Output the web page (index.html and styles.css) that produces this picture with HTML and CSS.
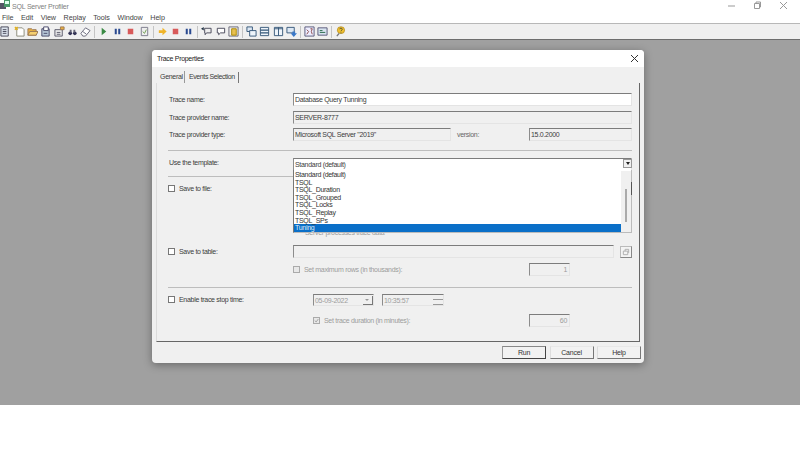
FILE: index.html
```html
<!DOCTYPE html>
<html lang="en">
<head>
    <meta charset="UTF-8">
    <title>SQL Server Profiler</title>
    <link rel="stylesheet" href="styles.css">
</head>
<body>
    <div class="titlebar">
        <svg class="app-icon" viewBox="0 0 11 11"><rect x="0" y="3" width="6" height="6" fill="#556"/><rect x="4" y="0" width="6" height="7" fill="#4a9a6a"/><rect x="5" y="1" width="4" height="3" fill="#dfe"/></svg>
        <span class="app-title">SQL Server Profiler</span>
        <div class="window-controls">
            <svg viewBox="0 0 9 9"><path d="M1 5h7" stroke="#999" fill="none"/></svg>
            <svg viewBox="0 0 9 9"><path d="M1.500 2.500h5v5h-5zM3 2.500V1h4.500v5H6.500" stroke="#999" fill="none"/></svg>
            <svg viewBox="0 0 9 9"><path d="M1 1l7 7M8 1l-7 7" stroke="#999" fill="none"/></svg>
        </div>
    </div>
    <div class="menubar">
        <span>File</span><span>Edit</span><span>View</span><span>Replay</span><span>Tools</span><span>Window</span><span>Help</span>
    </div>
    <div class="toolbar">
        <svg viewBox="0 0 12 12"><path d="M1 1h8v10H1z" fill="#dde4ee" stroke="#445"/><path d="M3 4h4M3 6h4M3 8h4" stroke="#445"/></svg>
        <svg viewBox="0 0 12 12"><path d="M3 2h6l2 2v7H3z" fill="#fff" stroke="#887"/><path d="M1 1l3 3M4 1L1 4" stroke="#e0b020" stroke-width="1.500"/></svg>
        <svg viewBox="0 0 12 12"><path d="M1 3h4l1 1h4v6H1z" fill="#e8b040" stroke="#975"/><path d="M3 6h9l-2 4H1z" fill="#f6d070" stroke="#975"/></svg>
        <svg viewBox="0 0 12 12"><path d="M2 3h8v8H2z" fill="#b8c8d8" stroke="#446"/><path d="M4 1h5v4H4z" fill="#fff" stroke="#446"/><path d="M4 8h4" stroke="#446"/></svg>
        <svg viewBox="0 0 12 12"><path d="M1 4h8v7H1z" fill="#eee" stroke="#556"/><path d="M3 7h4M3 9h4" stroke="#556"/><path d="M7 1h4v3H7z" fill="#e8b040" stroke="#975"/></svg>
        <svg viewBox="0 0 12 12"><circle cx="3.500" cy="8" r="2" fill="#335"/><circle cx="8.500" cy="8" r="2" fill="#335"/><path d="M3 4h2v3H3zM7 4h2v3H7z" fill="#667"/></svg>
        <svg viewBox="0 0 12 12"><path d="M1 8l5-6 5 3-5 6H3z" fill="#fff" stroke="#667"/><path d="M3 6l4 3" stroke="#667"/></svg>
        <i class="sep"></i>
        <svg viewBox="0 0 12 12"><path d="M4 2l5 4-5 4z" fill="#3a8a44"/></svg>
        <svg viewBox="0 0 12 12"><path d="M3 3h2.200v6H3zM6.800 3H9v6H6.800z" fill="#2a4a90"/></svg>
        <svg viewBox="0 0 12 12"><rect x="3" y="3" width="6" height="6" fill="#d85a5a"/></svg>
        <svg viewBox="0 0 12 12"><path d="M2.500 1.500h7v9h-7z" fill="#eee" stroke="#778"/><path d="M4 6l2 2 2-4" stroke="#6a9a4a" fill="none"/></svg>
        <i class="sep"></i>
        <svg viewBox="0 0 12 12"><path d="M2 4.500h4V2l4.500 4L6 10V7.500H2z" fill="#f0b428"/></svg>
        <svg viewBox="0 0 12 12"><rect x="3" y="3" width="6" height="6" fill="#d85a5a"/></svg>
        <svg viewBox="0 0 12 12"><path d="M3 3h2.200v6H3zM6.800 3H9v6H6.800z" fill="#2a4a90"/></svg>
        <i class="sep"></i>
        <svg viewBox="0 0 12 12"><path d="M4 2.500h7v5H6L4.500 9.500v-2H4z" fill="#eee" stroke="#445"/><path d="M0 3l3-2v4z" fill="#234"/></svg>
        <svg viewBox="0 0 12 12"><path d="M2.500 2.500h8v5H6l-2 2v-2H2.500z" fill="#fff" stroke="#445"/></svg>
        <svg viewBox="0 0 12 12"><path d="M1 1h10v10H1z" fill="#eee" stroke="#667"/><path d="M4 3h5v7H4z" fill="#e8c050" stroke="#a80"/></svg>
        <i class="sep"></i>
        <svg viewBox="0 0 12 12"><path d="M1 1h6v5H1z" fill="#dde8f4" stroke="#357"/><path d="M4 5h7v6H4z" fill="#eef4fa" stroke="#357"/></svg>
        <svg viewBox="0 0 12 12"><path d="M1.500 1.500h9v9h-9z" fill="#eef4fa" stroke="#357"/><path d="M1.500 4.500h9M1.500 7.500h9" stroke="#357" stroke-width="1.500"/></svg>
        <svg viewBox="0 0 12 12"><path d="M1.500 1.500h9v9h-9z" fill="#eef4fa" stroke="#357"/><path d="M6 1.500v9M1.500 3h9" stroke="#357"/></svg>
        <svg viewBox="0 0 12 12"><path d="M1 1.500h8v6H1z" fill="#dde8f4" stroke="#357"/><path d="M7 6h3v2h2l-3.500 4L5 8h2z" fill="#3a78c8"/></svg>
        <i class="sep"></i>
        <svg viewBox="0 0 12 12"><path d="M1 1h10v10H1z" fill="#eef" stroke="#557"/><path d="M3 4l2 2-2 3M7 3h2l-1 3 1 3" stroke="#844" fill="none"/></svg>
        <svg viewBox="0 0 12 12"><path d="M1 2h10v8H1z" fill="#d8e4f0" stroke="#557"/><path d="M3 5h3M3 7h6" stroke="#264"/></svg>
        <i class="sep"></i>
        <svg viewBox="0 0 12 12"><ellipse cx="6.500" cy="4.500" rx="4" ry="3.800" fill="#f0c030" stroke="#a07810" stroke-width=".6"/><path d="M5 3.500c0-1.500 3-1.500 3 0 0 1-1.500 1-1.500 2.300M6.500 7v1" stroke="#553" fill="none"/><path d="M2 11l2.500-3" stroke="#777" stroke-width="1.500"/></svg>
    </div>

    <div class="desktop">
        <div class="dialog">
            <div class="dialog-title">
                <span>Trace Properties</span>
                <svg class="dialog-close" viewBox="0 0 9 9"><path d="M1 1l7 7M8 1l-7 7" stroke="#333" fill="none"/></svg>
            </div>
            <div class="dialog-body">
                <div class="tabs">
                    <span class="tab active">General</span>
                    <span class="tab">Events Selection</span>
                </div>
                <div class="panel">
                    <div class="row row-top">
                        <label class="label">Trace name:</label>
                        <div class="field white grow">Database Query Tunning</div>
                    </div>
                    <div class="row row-top">
                        <label class="label">Trace provider name:</label>
                        <div class="field grow">SERVER-8777</div>
                    </div>
                    <div class="row row-top">
                        <label class="label">Trace provider type:</label>
                        <div class="field type-field">Microsoft SQL Server "2019"</div>
                        <label class="version-label">version:</label>
                        <div class="field grow">15.0.2000</div>
                    </div>
                    <hr class="rule rule-a">
                    <div class="row row-template">
                        <label class="label">Use the template:</label>
                        <div class="combo grow">
                            <div class="field white">Standard (default)</div>
                            <span class="combo-arrow"></span>
                            <div class="dropdown">
                                <div class="dropdown-list">
                                    <div class="option">Standard (default)</div>
                                    <div class="option">TSQL</div>
                                    <div class="option">TSQL_Duration</div>
                                    <div class="option">TSQL_Grouped</div>
                                    <div class="option">TSQL_Locks</div>
                                    <div class="option">TSQL_Replay</div>
                                    <div class="option">TSQL_SPs</div>
                                    <div class="option selected">Tuning</div>
                                </div>
                                <div class="dropdown-scroll"><span class="dropdown-thumb"></span></div>
                            </div>
                        </div>
                    </div>
                    <hr class="rule rule-b">
                    <div class="row row-file">
                        <span class="check"></span>
                        <label>Save to file:</label>
                    </div>
                    <div class="file-options">
                        <div class="clip"><label class="muted">Server processes trace data</label></div>
                    </div>
                    <div class="row">
                        <div class="check-label">
                            <span class="check"></span>
                            <label>Save to table:</label>
                        </div>
                        <div class="field grow"></div>
                        <span class="browse"><svg viewBox="0 0 9 9"><path d="M1.500 3.500h5v4h-5zM3.500 3.500V1.500h4v4" fill="none" stroke="#aaa"/></svg></span>
                    </div>
                    <div class="row row-rows">
                        <div class="indent"></div>
                        <span class="check disabled"></span>
                        <label class="muted grow">Set maximum rows (in thousands):</label>
                        <div class="field num muted">1</div>
                    </div>
                    <hr class="rule rule-c">
                    <div class="row row-stop">
                        <div class="check-label wide">
                            <span class="check"></span>
                            <label>Enable trace stop time:</label>
                        </div>
                        <div class="field date muted">05-09-2022<span class="date-arrow"></span></div>
                        <div class="field time muted">10:35:57<span class="spin"></span></div>
                    </div>
                    <div class="row row-duration">
                        <div class="indent wide"></div>
                        <span class="check disabled">
                            <svg viewBox="0 0 7 7"><path d="M1 3.500l2 2 3-4" fill="none" stroke="#888"/></svg>
                        </span>
                        <label class="muted grow">Set trace duration (in minutes):</label>
                        <div class="field num muted">60</div>
                    </div>
                </div>
                <div class="buttons">
                    <button class="default">Run</button>
                    <button>Cancel</button>
                    <button>Help</button>
                </div>
            </div>
        </div>
    </div>
</body>
</html>
```

FILE: styles.css
```css
* {
    box-sizing: border-box;
}
body {
    margin: 0;
    height: 449px;
    overflow: hidden;
    background-color: #fff;
    font-family: "Liberation Sans", Arial, sans-serif;
    font-size: 7px;
    letter-spacing: -0.3px;
    color: #3c3c3c;
}
.titlebar {
    height: 11px;
    display: flex;
    align-items: center;
}
.app-icon {
    width: 11px;
    height: 11px;
}
.app-title {
    margin-left: 1px;
    padding-top: 1px;
    letter-spacing: -0.2px;
    color: #808080;
}
.window-controls {
    margin-left: auto;
    margin-right: 12px;
    display: flex;
    gap: 17px;
}
.window-controls svg {
    width: 9px;
    height: 9px;
}
.menubar {
    height: 12px;
    display: flex;
    align-items: center;
    padding-left: 2px;
    gap: 7.6px;
    font-size: 7.2px;
    letter-spacing: -0.05px;
    color: #444;
}
.toolbar {
    height: 16px;
    display: flex;
    align-items: center;
    margin-left: -1px;
    background-color: #f0f0f0;
    border-top: 1px solid #b8b8b8;
}
.toolbar svg {
    width: 11px;
    height: 11px;
    margin: 0 1.2px;
    flex: none;
}
.sep {
    width: 1px;
    height: 12px;
    margin: 0 1.8px;
    background-color: #c4c4c4;
}
.desktop {
    height: 366px;
    position: relative;
    background-color: #a0a0a0;
    border-top: 1px solid #6e6e6e;
}
.dialog {
    position: absolute;
    left: 152px;
    top: 10px;
    width: 492px;
    height: 313px;
    background-color: #f0f0f0;
    border-radius: 4px;
    overflow: hidden;
    box-shadow: 0 2px 8px rgba(0, 0, 0, 0.35);
}
.dialog-title {
    height: 17px;
    display: flex;
    align-items: center;
    justify-content: space-between;
    padding: 0 5px 0 5px;
    background-color: #fff;
    color: #222;
}
.dialog-close {
    width: 9px;
    height: 9px;
}
.dialog-body {
    padding: 4px 4px 0 4px;
}
.tabs {
    display: flex;
    height: 12px;
    white-space: nowrap;
}
.tab {
    padding: 1px 0 0 1px;
    width: 51px;
    margin-top: 1px;
    letter-spacing: -0.4px;
    border-right: 1px solid #777;
}
.tab.active {
    width: 29px;
    padding-left: 4px;
    margin-top: 0;
    margin-right: 3px;
    padding-top: 2px;
    letter-spacing: -0.3px;
    border-right: 1px solid #999;
}
.panel {
    height: 259px;
    width: 484px;
    padding: 8px 7px 0 12px;
    border-left: 1px solid #dcdcdc;
    border-right: 1px solid #666;
    border-bottom: 1px solid #666;
}
.row {
    height: 17px;
    display: flex;
    align-items: center;
}
.row-top {
    height: 17.5px;
}
.label {
    width: 124px;
    flex: none;
}
.grow {
    flex: 1;
}
.field {
    height: 13px;
    padding: 1px 0 0 1px;
    line-height: 10px;
    border-top: 1px solid #7c7c7c;
    border-left: 1px solid #8c8c8c;
    border-right: 1px solid #e4e4e4;
    border-bottom: 1px solid #e4e4e4;
    position: relative;
    white-space: nowrap;
}
.white {
    background-color: #fff;
}
.type-field {
    width: 158px;
}
.version-label {
    width: 78px;
    padding-left: 6px;
    color: #666;
}
hr.rule {
    margin: 0 0 0 -1px;
    border: 0;
    height: 1px;
    background-color: #bdbdbd;
}
hr.rule-a {
    margin-top: 6px;
}
.row-template {
    margin-top: 3.5px;
    position: relative;
    z-index: 2;
}
hr.rule-b {
    margin-top: 5px;
}
.row-file {
    margin-top: 3px;
}
.check {
    width: 7px;
    height: 7px;
    flex: none;
    background-color: #fff;
    border: 1px solid #777;
    margin-right: 4px;
    display: inline-block;
}
.row-file .check,
.check-label .check {
    margin-left: -1px;
}
.check.disabled {
    background-color: #e8e8e8;
    border-color: #aaa;
}
.check svg {
    display: block;
    width: 5px;
    height: 5px;
}
.muted {
    color: #9c9c9c;
}
.file-options {
    height: 46px;
    padding: 36px 0 0 136px;
}
.clip {
    height: 4px;
    overflow: hidden;
}
.clip label {
    display: block;
    margin-top: -4px;
}
.check-label {
    width: 124px;
    flex: none;
    display: flex;
    align-items: center;
}
.check-label.wide,
.indent.wide {
    width: 144px;
}
.indent {
    width: 124px;
    flex: none;
}
.browse {
    width: 12px;
    height: 12px;
    margin-left: 6px;
    display: flex;
    align-items: center;
    justify-content: center;
    background-color: #f4f4f4;
    border: 1px solid #bbb;
    border-right-color: #888;
    border-bottom-color: #888;
}
.browse svg {
    width: 8px;
    height: 8px;
}
.row-rows {
    margin-top: 1px;
}
.num {
    width: 41px;
    margin-right: 62px;
    padding-right: 2px;
    flex: none;
    text-align: right;
}
hr.rule-c {
    margin-top: 9px;
}
.row-stop {
    margin-top: 3px;
}
.date {
    width: 61px;
    height: 12px;
}
.date-arrow {
    position: absolute;
    right: 0;
    top: 1px;
    width: 10px;
    height: 9px;
    border-bottom: 1px solid #777;
    border-right: 1px solid #777;
}
.date-arrow::after {
    content: "";
    position: absolute;
    left: 2px;
    top: 3px;
    border: 2px solid transparent;
    border-top: 2px solid #999;
}
.time {
    width: 62px;
    height: 12px;
    margin-left: 8px;
}
.spin {
    position: absolute;
    right: 0;
    top: 0;
    width: 10px;
    height: 10px;
    border-bottom: 1px solid #999;
    background: linear-gradient(#999, #999) center / 10px 1px no-repeat;
}
.row-duration {
    margin-top: 3.5px;
}
.combo {
    position: relative;
    margin-top: 4px;
}
.combo-arrow {
    position: absolute;
    right: 0;
    top: 1px;
    width: 9px;
    height: 9px;
    background-color: #f0f0f0;
    border: 1px solid #999;
}
.combo-arrow::after {
    content: "";
    position: absolute;
    left: 1.5px;
    top: 2px;
    border: 2px solid transparent;
    border-top: 3px solid #222;
}
.dropdown {
    position: absolute;
    left: 0;
    right: 0;
    top: 12px;
    height: 63px;
    padding-top: 1px;
    display: flex;
    background-color: #fff;
    border-left: 1px solid #777;
    border-bottom: 1px solid #bbb;
    border-right: 1px solid #bbb;
}
.dropdown::after {
    content: "";
    position: absolute;
    right: -1px;
    top: 12px;
    width: 1px;
    height: 13px;
    background-color: #555;
}
.dropdown-list {
    flex: 1;
}
.option {
    height: 7.6px;
    line-height: 7.6px;
    padding-left: 1px;
    color: #333;
}
.option.selected {
    background-color: #0a6fc8;
    color: #dfe8f4;
}
.dropdown-scroll {
    width: 10px;
    position: relative;
    background-color: #f0f0f0;
}
.dropdown-thumb {
    position: absolute;
    left: 4px;
    top: 18px;
    width: 2px;
    height: 33px;
    background-color: #aaa;
}
.buttons {
    display: flex;
    justify-content: flex-end;
    gap: 3.5px;
    margin: 4px -1px 0 0;
}
.buttons button {
    width: 44px;
    height: 13px;
    padding: 0;
    font-family: inherit;
    font-size: 7px;
    letter-spacing: -0.2px;
    color: #333;
    background-color: #f2f2f2;
    border: 1px solid;
    border-color: #e8e8e8 #777 #777 #ddd;
}
.buttons button.default {
    border-color: #888 #444 #444 #999;
}
```
